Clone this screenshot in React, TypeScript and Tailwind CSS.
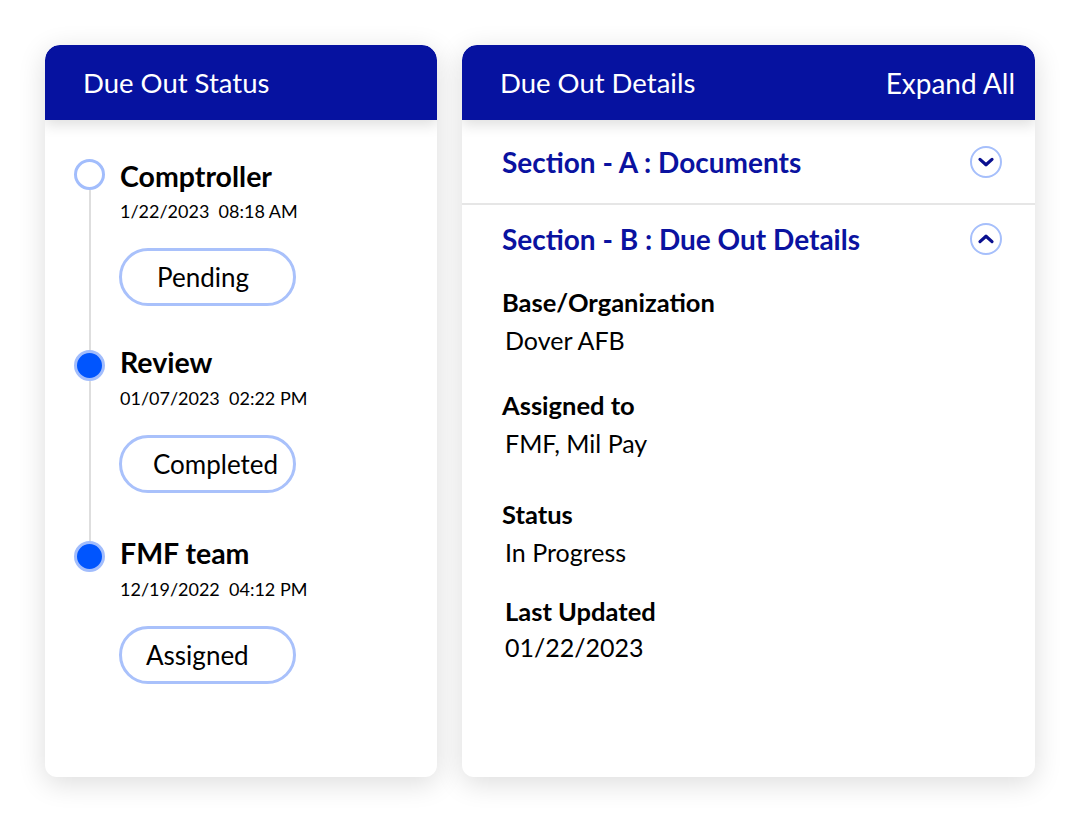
import React from "react";

const font = { fontFamily: "Lato, 'Open Sans', sans-serif" };

type Step = { title: string; date: string; status: string; filled: boolean; pl: string };

const steps: Step[] = [
  { title: "Comptroller", date: "1/22/2023\u00a0\u00a008:18 AM", status: "Pending", filled: false, pl: "pl-[35px]" },
  { title: "Review", date: "01/07/2023\u00a0\u00a002:22 PM", status: "Completed", filled: true, pl: "pl-[31px]" },
  { title: "FMF team", date: "12/19/2022\u00a0\u00a004:12 PM", status: "Assigned", filled: true, pl: "pl-[24px]" },
];

function ChevronCircle({ up }: { up?: boolean }) {
  return (
    <div className="w-[32px] h-[32px] rounded-full border-[2.5px] border-[#a6bffb] flex items-center justify-center">
      <svg width="18" height="12" viewBox="0 0 18 12" fill="none">
        {up ? (
          <path d="M3 8.6 L9 3.2 L15 8.6" stroke="#0a108f" strokeWidth="3.2" strokeLinecap="round" strokeLinejoin="round" />
        ) : (
          <path d="M3 3.4 L9 8.8 L15 3.4" stroke="#0a108f" strokeWidth="3.2" strokeLinecap="round" strokeLinejoin="round" />
        )}
      </svg>
    </div>
  );
}

function Field({ label, value, labelClass = "", valueClass = "", gap = "mt-[8px]" }: { label: string; value: string; labelClass?: string; valueClass?: string; gap?: string }) {
  return (
    <div>
      <div className={`text-[25.5px] leading-[30px] font-bold text-black ${labelClass}`}>{label}</div>
      <div className={`text-[25px] leading-[30px] text-black pl-[3px] ${gap} ${valueClass}`}>{value}</div>
    </div>
  );
}

export default function App() {
  return (
    <div className="w-[1080px] h-[822px] bg-white flex gap-[25px] pl-[45px] pt-[45px]" style={font}>
      {/* Left card */}
      <div className="w-[392px] h-[732px] bg-white rounded-t-[15px] rounded-b-[12px] shadow-[0_6px_28px_rgba(0,0,0,0.14)] flex flex-col overflow-hidden">
        <div className="relative z-10 h-[75px] bg-[#0612a0] rounded-t-[15px] flex items-center pl-[38px] shadow-[0_5px_14px_rgba(0,0,0,0.13)]">
          <span className="text-white text-[27.5px] leading-none">Due Out Status</span>
        </div>
        <div className="flex flex-col pl-[29px] pt-[39px]">
          {steps.map((s, i) => (
            <div key={s.title} className={`flex gap-[15px] ${i < steps.length - 1 ? "h-[191px]" : ""}`}>
              <div className="w-[31px] flex flex-col items-center">
                <div
                  className={`w-[31px] h-[31px] rounded-full border-[3px] border-[#a2bdfc] shrink-0 ${
                    s.filled ? "bg-[#0055fe]" : "bg-white"
                  }`}
                />
                {i < steps.length - 1 && <div className="w-[2px] flex-1 bg-[#dedede]" />}
              </div>
              <div className="flex flex-col">
                <div className={`h-[31px] leading-[31px] text-[28.5px] font-bold text-black ${i === 0 ? "mt-[2px]" : "-mt-[3px]"}`}>{s.title}</div>
                <div className={`${i === 0 ? "mt-[7px]" : "mt-[8px]"} text-[18px] leading-[24px] text-black`}>{s.date}</div>
                <div
                  className={`mt-[25px] -ml-[1px] w-[177px] h-[58px] rounded-full border-[3px] border-[#a9c1fb] flex items-center ${s.pl} text-[26px] text-black`}
                >
                  {s.status}
                </div>
              </div>
            </div>
          ))}
        </div>
      </div>

      {/* Right card */}
      <div className="w-[573px] h-[732px] bg-white rounded-t-[15px] rounded-b-[12px] shadow-[0_6px_28px_rgba(0,0,0,0.14)] flex flex-col overflow-hidden">
        <div className="relative z-10 h-[75px] bg-[#0612a0] rounded-t-[15px] flex items-center justify-between pl-[38px] pr-[20px] shadow-[0_5px_14px_rgba(0,0,0,0.13)]">
          <span className="text-white text-[27.5px] leading-none">Due Out Details</span>
          <span className="text-white text-[28px] leading-none">Expand All</span>
        </div>
        <div className="h-[85px] flex items-center justify-between pl-[40px] pr-[33px] border-b-[2px] border-[#e6e6e6]">
          <span className="text-[28px] font-bold text-[#0a12a0] leading-none">Section - A : Documents</span>
          <ChevronCircle />
        </div>
        <div className="h-[68px] flex items-center justify-between pl-[40px] pr-[33px]">
          <span className="text-[28px] font-bold text-[#0a12a0] leading-none">Section - B : Due Out Details</span>
          <ChevronCircle up />
        </div>
        <div className="flex flex-col pl-[40px] pt-[14px]">
          <Field label="Base/Organization" value="Dover AFB" />
          <div className="mt-[35px]">
            <Field label="Assigned to" value="FMF, Mil Pay" />
          </div>
          <div className="mt-[41px]">
            <Field label="Status" value="In Progress" />
          </div>
          <div className="mt-[29px]">
            <Field label="Last Updated" value="01/22/2023" labelClass="pl-[3px]" gap="mt-[6px]" />
          </div>
        </div>
      </div>
    </div>
  );
}
